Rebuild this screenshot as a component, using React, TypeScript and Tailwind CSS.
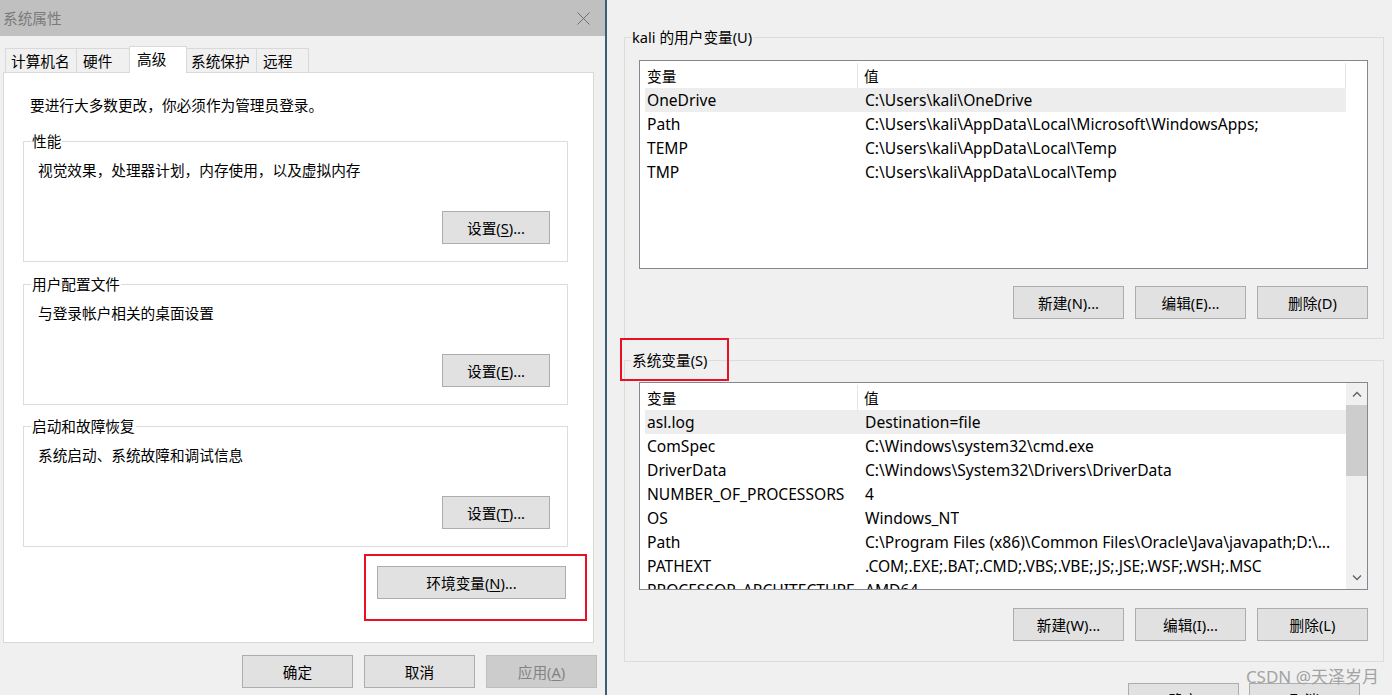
import React from "react";

type BtnProps = { children: React.ReactNode; cls?: string; disabled?: boolean };

function Btn({ children, cls = "w-[111px]", disabled }: BtnProps) {
  return (
    <div
      className={
        "h-[33px] shrink-0 flex items-center justify-center border leading-[20px] " +
        (disabled
          ? "border-[#bfbfbf] bg-[#cccccc] text-[#838383] "
          : "border-[#adadad] bg-[#e1e1e1] text-black ") +
        cls
      }
    >
      {children}
    </div>
  );
}

function Group({ label, text, children }: { label: string; text: string; children: React.ReactNode }) {
  return (
    <div className="relative ml-[19px] mr-[25px] h-[121px] border border-[#dcdcdc] flex flex-col">
      <span className="absolute -top-[11px] left-[7px] px-[1px] bg-white leading-[20px]">{label}</span>
      <div className="pl-[14px] pt-[18px] leading-[20px]">{text}</div>
      <div className="mt-[31px] flex justify-end pr-[17px]">{children}</div>
    </div>
  );
}

function Chevron({ up }: { up?: boolean }) {
  return (
    <svg width="10" height="6" viewBox="0 0 10 6">
      <polyline
        points={up ? "1,5.5 5,1.5 9,5.5" : "1,0.5 5,4.5 9,0.5"}
        fill="none"
        stroke="#606060"
        strokeWidth="1.3"
      />
    </svg>
  );
}

function ListBox({
  rows,
  h,
  scroll,
}: {
  rows: [string, string][];
  h: string;
  scroll?: boolean;
}) {
  return (
    <div className={"ml-[14px] w-[729px] border border-[#828790] bg-white flex overflow-hidden " + h}>
      <div className="w-[706px] flex flex-col shrink-0">
        <div className="flex h-[27px] shrink-0 items-center pt-[2px] leading-[20px]">
          <div className="w-[218px] h-full flex items-center pl-[7px] border-r border-[#e5e5e5]">变量</div>
          <div className={"flex-1 h-full flex items-center pl-[6px] " + (scroll ? "" : "border-r border-[#e5e5e5]")}>值</div>
        </div>
        {rows.map(([k, v], i) => (
          <div
            key={k + i}
            className={
              "ml-[5px] h-[24px] shrink-0 flex items-center leading-[20px] whitespace-nowrap text-[15.6px] " +
              (i === 0 ? "bg-[#ededed]" : "")
            }
          >
            <div className="w-[213px] pl-[2px] shrink-0">{k}</div>
            <div className="pl-[7px] overflow-hidden">{v}</div>
          </div>
        ))}
      </div>
      {scroll && (
        <div className="w-[21px] shrink-0 bg-[#f0f0f0] flex flex-col">
          <div className="h-[22px] flex items-center justify-center">
            <Chevron up />
          </div>
          <div className="h-[71px] bg-[#cdcdcd]" />
          <div className="flex-1" />
          <div className="h-[22px] flex items-center justify-center">
            <Chevron />
          </div>
        </div>
      )}
    </div>
  );
}

export default function App() {
  const userRows: [string, string][] = [
    ["OneDrive", "C:\\Users\\kali\\OneDrive"],
    ["Path", "C:\\Users\\kali\\AppData\\Local\\Microsoft\\WindowsApps;"],
    ["TEMP", "C:\\Users\\kali\\AppData\\Local\\Temp"],
    ["TMP", "C:\\Users\\kali\\AppData\\Local\\Temp"],
  ];
  const sysRows: [string, string][] = [
    ["asl.log", "Destination=file"],
    ["ComSpec", "C:\\Windows\\system32\\cmd.exe"],
    ["DriverData", "C:\\Windows\\System32\\Drivers\\DriverData"],
    ["NUMBER_OF_PROCESSORS", "4"],
    ["OS", "Windows_NT"],
    ["Path", "C:\\Program Files (x86)\\Common Files\\Oracle\\Java\\javapath;D:\\..."],
    ["PATHEXT", ".COM;.EXE;.BAT;.CMD;.VBS;.VBE;.JS;.JSE;.WSF;.WSH;.MSC"],
    ["PROCESSOR_ARCHITECTURE", "AMD64"],
  ];

  return (
    <div className="w-[1392px] h-[695px] flex overflow-hidden bg-[#f0f0f0] text-[14.67px] text-black font-['Noto_Sans','Noto_Sans_CJK_SC',sans-serif]">
      {/* Left dialog */}
      <div className="w-[605px] shrink-0 flex flex-col bg-[#f0f0f0]">
        <div className="h-[36px] shrink-0 bg-[#c0c0c0] flex items-center justify-between pl-[3px] pr-[15px]">
          <span className="text-[#7b7b7b] leading-[20px]">系统属性</span>
          <svg width="13" height="13" viewBox="0 0 13 13">
            <line x1="0.5" y1="0.5" x2="12.5" y2="12.5" stroke="#6f6f6f" strokeWidth="1" />
            <line x1="12.5" y1="0.5" x2="0.5" y2="12.5" stroke="#6f6f6f" strokeWidth="1" />
          </svg>
        </div>

        {/* Tabs */}
        <div className="relative z-10 mt-[10px] mb-[-1px] h-[27px] flex items-end pl-[5px] leading-[20px]">
          <div className="w-[72px] h-[25px] border border-[#d9d9d9] bg-[#f0f0f0] pl-[5px] flex items-center">计算机名</div>
          <div className="-ml-px w-[56px] h-[25px] border border-[#d9d9d9] bg-[#f0f0f0] pl-[6px] flex items-center">硬件</div>
          <div className="relative z-10 ml-[-3px] w-[58px] h-[27px] border border-b-0 border-[#d9d9d9] bg-white pl-[7px] pb-[2px] flex items-center">高级</div>
          <div className="-ml-px w-[71px] h-[25px] border border-[#d9d9d9] bg-[#f0f0f0] pl-[4px] flex items-center">系统保护</div>
          <div className="-ml-px w-[53px] h-[25px] border border-[#d9d9d9] bg-[#f0f0f0] pl-[6px] flex items-center">远程</div>
        </div>

        {/* Panel */}
        <div className="ml-[3px] w-[591px] h-[571px] shrink-0 border border-[#d9d9d9] bg-white flex flex-col">
          <div className="pl-[26px] pt-[22px] leading-[20px]">要进行大多数更改，你必须作为管理员登录。</div>
          <div className="mt-[26px]">
            <Group label="性能" text="视觉效果，处理器计划，内存使用，以及虚拟内存">
              <Btn cls="w-[108px]">
                设置(<span className="underline underline-offset-2">S</span>)...
              </Btn>
            </Group>
          </div>
          <div className="mt-[22px]">
            <Group label="用户配置文件" text="与登录帐户相关的桌面设置">
              <Btn cls="w-[108px]">
                设置(<span className="underline underline-offset-2">E</span>)...
              </Btn>
            </Group>
          </div>
          <div className="mt-[21px]">
            <Group label="启动和故障恢复" text="系统启动、系统故障和调试信息">
              <Btn cls="w-[108px]">
                设置(<span className="underline underline-offset-2">T</span>)...
              </Btn>
            </Group>
          </div>
          <div className="mt-[7px] ml-[360px] w-[223px] h-[67px] border-2 border-[#e81123] pl-[11px] pt-[10px]">
            <Btn cls="w-[189px]">
              环境变量(<span className="underline underline-offset-2">N</span>)...
            </Btn>
          </div>
        </div>

        <div className="mt-[12px] ml-[242px] flex gap-[11px]">
          <Btn>确定</Btn>
          <Btn>取消</Btn>
          <Btn disabled>
            应用(<span className="underline underline-offset-2">A</span>)
          </Btn>
        </div>
      </div>

      {/* Divider */}
      <div className="w-[2px] shrink-0 bg-[#3d5d72]" />

      {/* Right dialog */}
      <div className="relative flex-1 flex flex-col pl-[17px] bg-[#f0f0f0]">
        <div className="relative mt-[37px] w-[760px] h-[302px] shrink-0 border border-[#dcdcdc] flex flex-col">
          <span className="absolute -top-[11px] left-[6px] px-[1px] bg-[#f0f0f0] leading-[20px]">kali 的用户变量(U)</span>
          <div className="mt-[22px]">
            <ListBox rows={userRows} h="h-[209px]" />
          </div>
          <div className="mt-[17px] mr-[15px] flex justify-end gap-[11px]">
            <Btn>新建(N)...</Btn>
            <Btn>编辑(E)...</Btn>
            <Btn>删除(D)</Btn>
          </div>
        </div>

        <div className="relative mt-[21px] w-[760px] h-[302px] shrink-0 border border-[#dcdcdc] flex flex-col">
          <span className="absolute -top-[11px] left-[6px] px-[1px] bg-[#f0f0f0] leading-[20px]">系统变量(S)</span>
          <div className="mt-[21px]">
            <ListBox rows={sysRows} h="h-[208px]" scroll />
          </div>
          <div className="mt-[18px] mr-[15px] flex justify-end gap-[11px]">
            <Btn>新建(W)...</Btn>
            <Btn>编辑(I)...</Btn>
            <Btn>删除(L)</Btn>
          </div>
        </div>

        <div className="mt-[21px] pr-[32px] flex justify-end gap-[10px]">
          <Btn>确定</Btn>
          <Btn>取消</Btn>
        </div>

        {/* red highlight */}
        <div className="absolute left-[13px] top-[338px] w-[109px] h-[43px] border-2 border-[#e81123]" />

        {/* watermark */}
        <div className="absolute right-[13px] top-[665px] text-[17px] leading-[24px] text-[#a3a3a3] whitespace-nowrap">
          CSDN @天泽岁月
        </div>
      </div>
    </div>
  );
}
